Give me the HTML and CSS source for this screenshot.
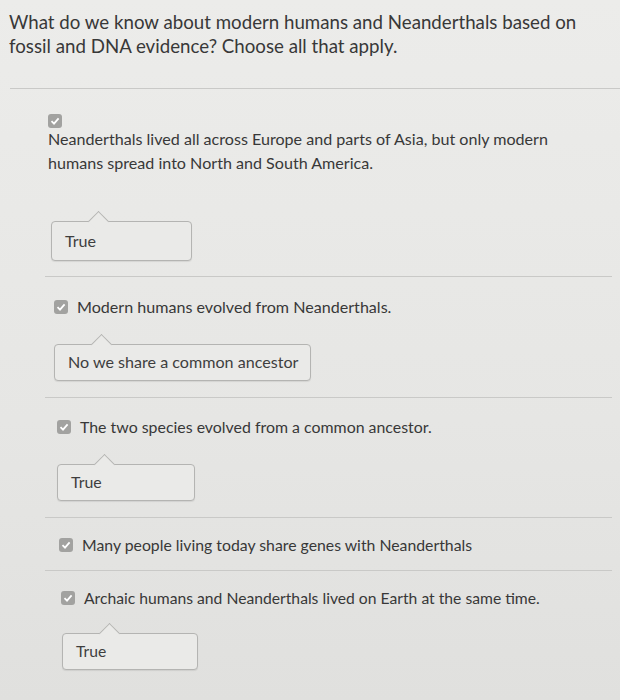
FILE: index.html
```html
<!DOCTYPE html>
<html lang="en">
<head>
  <meta charset="UTF-8">
  <meta name="viewport" content="width=device-width, initial-scale=1.0">
  <title>Question</title>
  <link rel="stylesheet" href="styles.css">
</head>
<body>
<div class="question">What do we know about modern humans and Neanderthals based on fossil and DNA evidence? Choose all that apply.</div>
<hr class="rule rule-top">

<div class="item item-1">
  <div class="check"><svg viewBox="0 0 14 14"><path d="M3.5 7.2 L6 9.6 L10.6 4.4" fill="none" stroke="#fff" stroke-width="1.8"/></svg></div>
  <div class="label">Neanderthals lived all across Europe and parts of Asia, but only modern humans spread into North and South America.</div>
  <div class="feedback">True</div>
</div>
<hr class="rule">

<div class="item item-2">
  <div class="row">
    <div class="check"><svg viewBox="0 0 14 14"><path d="M3.5 7.2 L6 9.6 L10.6 4.4" fill="none" stroke="#fff" stroke-width="1.8"/></svg></div>
    <div class="label">Modern humans evolved from Neanderthals.</div>
  </div>
  <div class="feedback">No we share a common ancestor</div>
</div>
<hr class="rule">

<div class="item item-3">
  <div class="row">
    <div class="check"><svg viewBox="0 0 14 14"><path d="M3.5 7.2 L6 9.6 L10.6 4.4" fill="none" stroke="#fff" stroke-width="1.8"/></svg></div>
    <div class="label">The two species evolved from a common ancestor.</div>
  </div>
  <div class="feedback">True</div>
</div>
<hr class="rule">

<div class="item item-4">
  <div class="row">
    <div class="check"><svg viewBox="0 0 14 14"><path d="M3.5 7.2 L6 9.6 L10.6 4.4" fill="none" stroke="#fff" stroke-width="1.8"/></svg></div>
    <div class="label">Many people living today share genes with Neanderthals</div>
  </div>
</div>
<hr class="rule">

<div class="item item-5">
  <div class="row">
    <div class="check"><svg viewBox="0 0 14 14"><path d="M3.5 7.2 L6 9.6 L10.6 4.4" fill="none" stroke="#fff" stroke-width="1.8"/></svg></div>
    <div class="label">Archaic humans and Neanderthals lived on Earth at the same time.</div>
  </div>
  <div class="feedback">True</div>
</div>
</body>
</html>
```

FILE: styles.css
```css
body {
  font-family: Lato, "Open Sans", sans-serif;
  background: linear-gradient(#ececea, #e6e6e4 60%, #e0e0de);
  color: #383838;
  margin: 0;
  padding: 0;
  min-height: 700px;
}
.question {
  font-size: 18.7px;
  line-height: 24px;
  padding: 10px 20px 0 9px;
}
.rule {
  border: none;
  border-top: 1px solid #c9c9c7;
  margin: 0 8px 0 45px;
}
.rule-top {
  margin: 30px 0 0 10px;
}
.item {
  font-size: 16.1px;
  line-height: 24px;
}
.row {
  display: flex;
  align-items: center;
  gap: 9px;
}
.check {
  width: 14px;
  height: 14px;
  border-radius: 3px;
  background-color: #a2a2a0;
  flex-shrink: 0;
}
.check svg {
  display: block;
  width: 14px;
  height: 14px;
}
.feedback {
  position: relative;
  display: inline-block;
  min-width: 114px;
  padding: 5px 12px 6px 13px;
  border: 1px solid #b4b4b2;
  border-radius: 4px;
  background-color: #eaeae8;
  box-shadow: 0 1px 1px rgba(0, 0, 0, 0.08);
  color: #3e3e3e;
}
.feedback::before {
  content: "";
  position: absolute;
  top: -8px;
  left: 39px;
  width: 14px;
  height: 14px;
  background-color: #eaeae8;
  border-top: 1px solid #b4b4b2;
  border-left: 1px solid #b4b4b2;
  transform: rotate(45deg);
}
.item-1 {
  padding: 25px 20px 15px 48px;
}
.item-1 .check {
  margin-bottom: -1px;
}
.item-1 .label {
  padding-right: 20px;
}
.item-1 .feedback {
  margin: 46px 0 0 3px;
  padding: 7px 12px 7px 13px;
}
.item-2 {
  padding: 18px 0 16px 54px;
}
.item-2 .feedback {
  margin-top: 25px;
}
.item-3 {
  padding: 17px 0 16px 57px;
  font-size: 15.9px;
}
.item-3 .feedback {
  margin-top: 25px;
  min-width: 111px;
}
.item-4 {
  padding: 15px 0 13px 59px;
  font-size: 15.8px;
}
.item-5 {
  padding: 15px 0 0 61px;
  font-size: 15.7px;
}
.item-5 .feedback {
  margin: 23px 0 0 1px;
  min-width: 109px;
}
```
